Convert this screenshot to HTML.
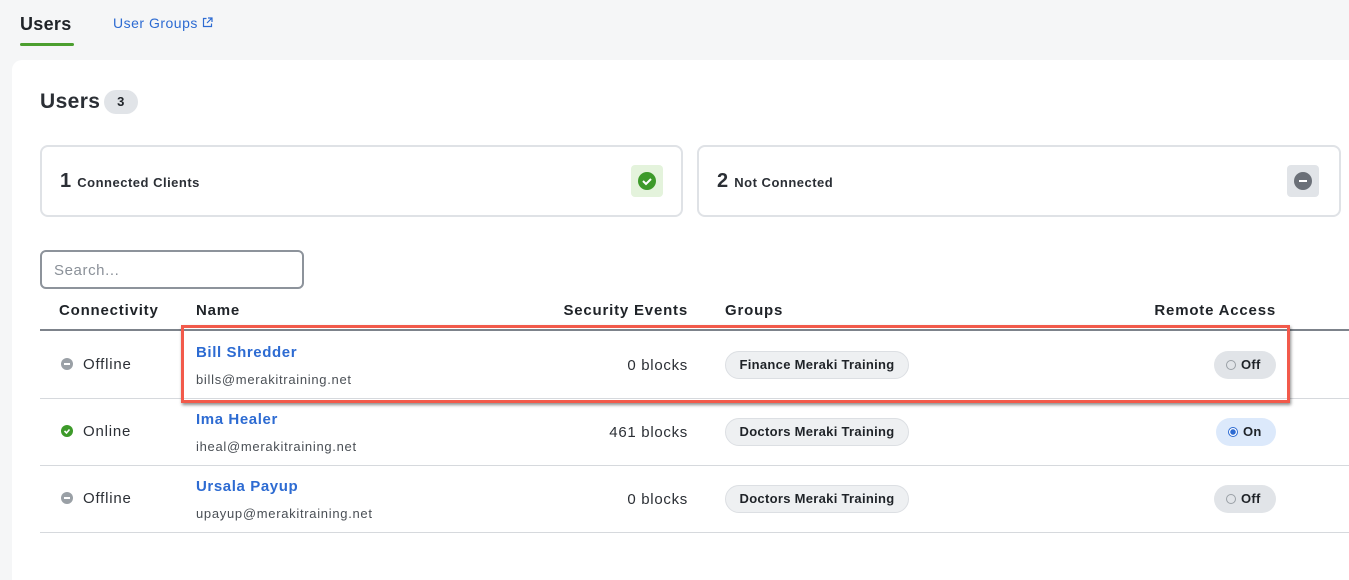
<!DOCTYPE html>
<html><head><meta charset="utf-8"><style>
*{box-sizing:border-box;margin:0;padding:0}
body{width:1349px;height:544px;overflow:hidden;background:#f5f6f7;font-family:"Liberation Sans",sans-serif;color:#1f2328;position:relative;letter-spacing:0.6px}
.a{position:absolute;white-space:nowrap}
.panel{position:absolute;left:12px;top:60px;width:1400px;height:520px;background:#fff;border-radius:10px 0 0 0}
.card{position:absolute;top:145px;height:72px;border:2px solid #dfe2e6;border-radius:8px;background:#fff}
.card .n{position:absolute;left:18px;top:23px;font-size:20px;font-weight:bold;color:#2b2f35;letter-spacing:0.3px}
.card .n span{font-size:13px;letter-spacing:0.5px}
.ib{position:absolute;top:18px;width:32px;height:32px;border-radius:4px}
.th{font-size:15px;font-weight:bold;top:302px;letter-spacing:0.8px}
.line{position:absolute;left:40px;width:1320px;height:1px;background:#d6d9dd}
.st{font-size:15px;color:#2b2f35;letter-spacing:0.8px}
.dot{display:inline-block;width:12px;height:12px;border-radius:50%;vertical-align:-1px;margin-right:10px;position:relative}
.nm{font-size:15px;font-weight:bold;color:#2d6bd2;letter-spacing:0.6px}
.em{font-size:13px;color:#4a4f55;letter-spacing:0.7px}
.bl{font-size:15px;color:#2b2f35;text-align:right;width:140px;left:548px;letter-spacing:0.7px}
.grp{left:725px;width:184px;height:28px;border:1px solid #dcdfe3;background:#eef0f2;border-radius:14px;font-size:13px;font-weight:bold;text-align:center;line-height:26px;letter-spacing:0.3px}
.tg{height:28px;border-radius:14px;font-size:13px;font-weight:bold;line-height:28px;padding-left:12px;letter-spacing:0.3px}
.tg i{display:inline-block;width:10px;height:10px;border-radius:50%;border:1px solid #9aa0a6;vertical-align:-1px;margin-right:5px;font-style:normal}
</style></head><body>
<div class="a" style="left:20px;top:14px;font-size:18px;font-weight:bold;letter-spacing:0.3px">Users</div>
<div class="a" style="left:20px;top:43px;width:54px;height:3px;background:#4c9f2f;border-radius:2px"></div>
<div class="a" style="left:113px;top:15px;font-size:14px;color:#2d6bd2;letter-spacing:0.5px">User Groups <svg width="11" height="11" viewBox="0 0 11 11" style="vertical-align:0"><path d="M4.5 1.5H1.5v8h8V6.5M6 1h4v4M10 1L5 6" fill="none" stroke="#2d6bd2" stroke-width="1.2"/></svg></div>
<div class="panel"></div>
<div class="a" style="left:40px;top:90px;font-size:21px;font-weight:bold;color:#2b2f35;letter-spacing:0.4px">Users</div>
<div class="a" style="left:104px;top:90px;width:34px;height:24px;border-radius:12px;background:#e1e4e8;font-size:13px;font-weight:bold;text-align:center;line-height:24px">3</div>

<div class="card" style="left:40px;width:643px"><div class="n">1 <span>Connected Clients</span></div>
<div class="ib" style="left:589px;background:#e4f3dc"><svg width="32" height="32"><circle cx="16" cy="16" r="9" fill="#3d9a2a"/><path d="M12 16l3 3 5-5" fill="none" stroke="#fff" stroke-width="2"/></svg></div></div>
<div class="card" style="left:697px;width:644px"><div class="n">2 <span>Not Connected</span></div>
<div class="ib" style="left:588px;background:#e1e4e8"><svg width="32" height="32"><circle cx="16" cy="16" r="9" fill="#6b7078"/><path d="M12 16h8" stroke="#fff" stroke-width="2"/></svg></div></div>

<div class="a" style="left:40px;top:250px;width:264px;height:39px;border:2px solid #8d939b;border-radius:6px;font-size:15px;color:#8a9098;padding:10px 0 0 12px">Search...</div>

<div class="a th" style="left:59px">Connectivity</div>
<div class="a th" style="left:196px">Name</div>
<div class="a th" style="left:508px;width:180px;text-align:right">Security Events</div>
<div class="a th" style="left:725px">Groups</div>
<div class="a th" style="left:1096px;width:180px;text-align:right">Remote Access</div>
<div class="line" style="top:329px;height:2px;background:#7d838b"></div>
<div class="line" style="top:398px"></div>
<div class="line" style="top:465px"></div>
<div class="line" style="top:532px"></div>

<div class="a st" style="left:61px;top:356px"><span class="dot" style="background:#9aa0a6"><b style="position:absolute;left:3px;top:5px;width:6px;height:2px;background:#fff"></b></span>Offline</div>
<div class="a nm" style="left:196px;top:344px">Bill Shredder</div>
<div class="a em" style="left:196px;top:372px">bills@merakitraining.net</div>
<div class="a bl" style="top:357px">0 blocks</div>
<div class="a grp" style="top:351px">Finance Meraki Training</div>
<div class="a tg" style="left:1214px;top:351px;width:62px;background:#e1e4e8"><i></i>Off</div>

<div class="a st" style="left:61px;top:423px"><span class="dot" style="background:#3d9a2a"><svg width="12" height="12" style="position:absolute;left:0;top:0"><path d="M3.5 6l2 2 3-3.5" fill="none" stroke="#fff" stroke-width="1.6"/></svg></span>Online</div>
<div class="a nm" style="left:196px;top:411px">Ima Healer</div>
<div class="a em" style="left:196px;top:439px">iheal@merakitraining.net</div>
<div class="a bl" style="top:424px">461 blocks</div>
<div class="a grp" style="top:418px">Doctors Meraki Training</div>
<div class="a tg" style="left:1216px;top:418px;width:60px;background:#dce9fb"><i style="border-color:#2d6bd2;background:radial-gradient(circle,#2d6bd2 2.5px,#fff 3px)"></i>On</div>

<div class="a st" style="left:61px;top:490px"><span class="dot" style="background:#9aa0a6"><b style="position:absolute;left:3px;top:5px;width:6px;height:2px;background:#fff"></b></span>Offline</div>
<div class="a nm" style="left:196px;top:478px">Ursala Payup</div>
<div class="a em" style="left:196px;top:506px">upayup@merakitraining.net</div>
<div class="a bl" style="top:491px">0 blocks</div>
<div class="a grp" style="top:485px">Doctors Meraki Training</div>
<div class="a tg" style="left:1214px;top:485px;width:62px;background:#e1e4e8"><i></i>Off</div>

<div class="a" style="left:181px;top:325px;width:1109px;height:78px;border:3px solid #f25a4b;box-shadow:1px 2px 3px rgba(0,0,0,.45)"></div>
</body></html>
